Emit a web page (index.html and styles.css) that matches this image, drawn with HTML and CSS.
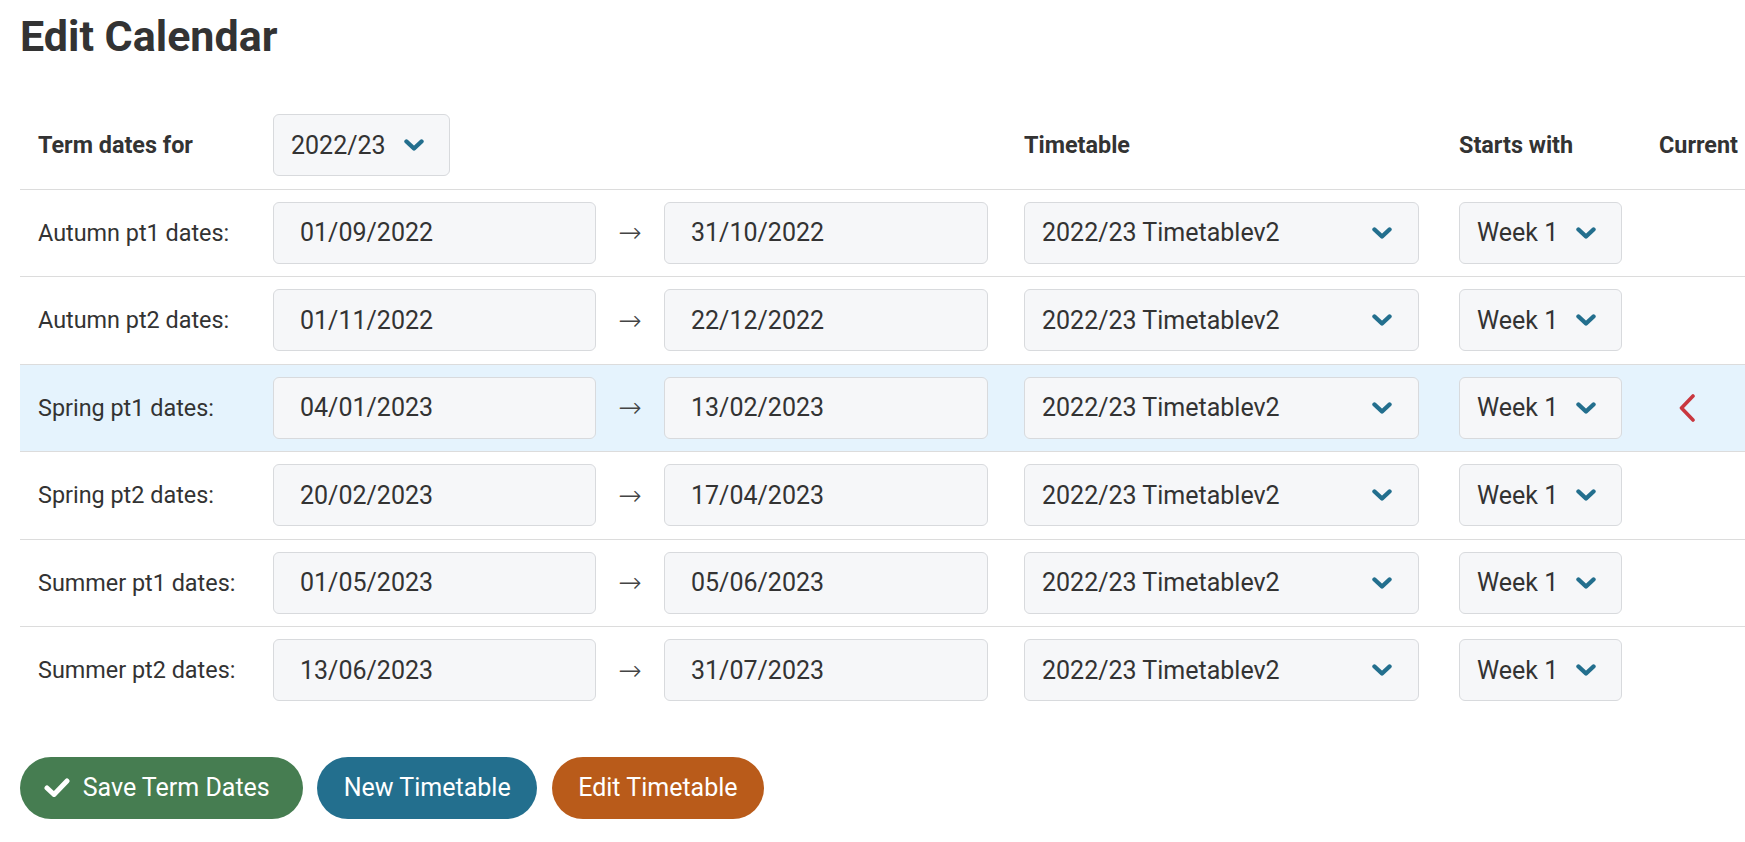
FILE: index.html
```html
<!DOCTYPE html>
<html lang="en">
<head>
<meta charset="utf-8">
<title>Edit Calendar</title>
<link rel="stylesheet" href="styles.css">
</head>
<body>
<div class="page">
  <h1 class="title">Edit Calendar</h1>

  <div class="terms">
    <div class="row head">
      <div class="label">Term dates for</div>
      <div class="field select year"><span>2022/23</span><svg class="chev" viewBox="0 0 20 12" width="20" height="12"><polyline points="2.5,2.5 10,9.5 17.5,2.5"/></svg></div>
      <div class="colhead tt-col">Timetable</div>
      <div class="colhead wk-col">Starts with</div>
      <div class="colhead cur-col">Current</div>
    </div>

    <div class="row">
      <div class="label">Autumn pt1 dates:</div>
      <div class="field date">01/09/2022</div>
      <div class="arrow">→</div>
      <div class="field date">31/10/2022</div>
      <div class="field select tt"><span>2022/23 Timetablev2</span><svg class="chev" viewBox="0 0 20 12" width="20" height="12"><polyline points="2.5,2.5 10,9.5 17.5,2.5"/></svg></div>
      <div class="field select week"><span>Week 1</span><svg class="chev" viewBox="0 0 20 12" width="20" height="12"><polyline points="2.5,2.5 10,9.5 17.5,2.5"/></svg></div>
    </div>

    <div class="row">
      <div class="label">Autumn pt2 dates:</div>
      <div class="field date">01/11/2022</div>
      <div class="arrow">→</div>
      <div class="field date">22/12/2022</div>
      <div class="field select tt"><span>2022/23 Timetablev2</span><svg class="chev" viewBox="0 0 20 12" width="20" height="12"><polyline points="2.5,2.5 10,9.5 17.5,2.5"/></svg></div>
      <div class="field select week"><span>Week 1</span><svg class="chev" viewBox="0 0 20 12" width="20" height="12"><polyline points="2.5,2.5 10,9.5 17.5,2.5"/></svg></div>
    </div>

    <div class="row current">
      <div class="label">Spring pt1 dates:</div>
      <div class="field date">04/01/2023</div>
      <div class="arrow">→</div>
      <div class="field date">13/02/2023</div>
      <div class="field select tt"><span>2022/23 Timetablev2</span><svg class="chev" viewBox="0 0 20 12" width="20" height="12"><polyline points="2.5,2.5 10,9.5 17.5,2.5"/></svg></div>
      <div class="field select week"><span>Week 1</span><svg class="chev" viewBox="0 0 20 12" width="20" height="12"><polyline points="2.5,2.5 10,9.5 17.5,2.5"/></svg></div>
      <div class="marker"><svg viewBox="0 0 17 28" width="17" height="28"><polyline points="15,2 3.5,14 15,26"/></svg></div>
    </div>

    <div class="row">
      <div class="label">Spring pt2 dates:</div>
      <div class="field date">20/02/2023</div>
      <div class="arrow">→</div>
      <div class="field date">17/04/2023</div>
      <div class="field select tt"><span>2022/23 Timetablev2</span><svg class="chev" viewBox="0 0 20 12" width="20" height="12"><polyline points="2.5,2.5 10,9.5 17.5,2.5"/></svg></div>
      <div class="field select week"><span>Week 1</span><svg class="chev" viewBox="0 0 20 12" width="20" height="12"><polyline points="2.5,2.5 10,9.5 17.5,2.5"/></svg></div>
    </div>

    <div class="row">
      <div class="label">Summer pt1 dates:</div>
      <div class="field date">01/05/2023</div>
      <div class="arrow">→</div>
      <div class="field date">05/06/2023</div>
      <div class="field select tt"><span>2022/23 Timetablev2</span><svg class="chev" viewBox="0 0 20 12" width="20" height="12"><polyline points="2.5,2.5 10,9.5 17.5,2.5"/></svg></div>
      <div class="field select week"><span>Week 1</span><svg class="chev" viewBox="0 0 20 12" width="20" height="12"><polyline points="2.5,2.5 10,9.5 17.5,2.5"/></svg></div>
    </div>

    <div class="row last">
      <div class="label">Summer pt2 dates:</div>
      <div class="field date">13/06/2023</div>
      <div class="arrow">→</div>
      <div class="field date">31/07/2023</div>
      <div class="field select tt"><span>2022/23 Timetablev2</span><svg class="chev" viewBox="0 0 20 12" width="20" height="12"><polyline points="2.5,2.5 10,9.5 17.5,2.5"/></svg></div>
      <div class="field select week"><span>Week 1</span><svg class="chev" viewBox="0 0 20 12" width="20" height="12"><polyline points="2.5,2.5 10,9.5 17.5,2.5"/></svg></div>
    </div>
  </div>

  <div class="actions">
    <button class="btn btn-save"><svg class="check" viewBox="0 0 26 19" width="26" height="19"><polyline points="3,10 10,16.5 23,3"/></svg>Save Term Dates</button>
    <button class="btn btn-new">New Timetable</button>
    <button class="btn btn-edit">Edit Timetable</button>
  </div>
</div>
</body>
</html>
```

FILE: styles.css
```css
html, body {
  margin: 0;
  padding: 0;
  background: #ffffff;
}

body {
  font-family: Roboto, "Liberation Sans", Arial, sans-serif;
  color: #333333;
}

.page {
  padding: 10px 0 0 20px;
}

.title {
  margin: 0 0 40px;
  font-size: 43px;
  line-height: 52px;
  font-weight: 700;
  color: #333333;
}

.row {
  display: grid;
  grid-template-columns: 253px 323px 68px 324px 36px 395px 40px 163px 37px 1fr;
  align-items: center;
  padding: 12px 0 12.5px;
  border-bottom: 1px solid #dcdcdc;
}

.row.last {
  border-bottom: none;
}

.row.current {
  background: #e5f3fd;
}

.label {
  grid-column: 1;
  padding-left: 18px;
  font-size: 23.4px;
}

.head .label,
.colhead {
  font-weight: 700;
  font-size: 23.4px;
}

.tt-col { grid-column: 6; }
.wk-col { grid-column: 8; white-space: nowrap; }
.cur-col { grid-column: 10; }

.field {
  height: 62px;
  box-sizing: border-box;
  border: 1px solid #d8dadd;
  border-radius: 6px;
  background: #f6f7f9;
  font-size: 25px;
  color: #333333;
  display: flex;
  align-items: center;
  padding-left: 26px;
  white-space: nowrap;
}

.select {
  padding: 0 25.7px 0 17px;
  gap: 18px;
}

.select .chev {
  margin-left: auto;
  flex: none;
}

.chev polyline {
  fill: none;
  stroke: #236f8e;
  stroke-width: 4.4;
  stroke-linecap: round;
  stroke-linejoin: round;
}

.year {
  grid-column: 2;
  justify-self: start;
}

.arrow {
  grid-column: 3;
  text-align: center;
  font-size: 28px;
  color: #444444;
  font-family: "DejaVu Sans", sans-serif;
  font-weight: 200;
}

.tt {
  grid-column: 6;
}

.week {
  grid-column: 8;
}

.marker {
  grid-column: 10;
  padding-left: 19px;
  display: flex;
  align-items: center;
}

.marker polyline {
  fill: none;
  stroke: #c9373f;
  stroke-width: 3.6;
  stroke-linecap: round;
  stroke-linejoin: round;
}

.actions {
  display: flex;
  gap: 14.5px;
  margin-top: 43px;
}

.btn {
  height: 62.7px;
  border: none;
  border-radius: 32px;
  padding: 0 27px;
  font-family: inherit;
  font-size: 25px;
  color: #ffffff;
  display: inline-flex;
  align-items: center;
  cursor: pointer;
}

.btn-save {
  background: #467d51;
  padding: 0 33px 0 24px;
}

.btn-new {
  background: #236f8e;
  padding: 0 26.5px;
}

.btn-edit {
  background: #b95b1a;
  padding: 0 26.5px;
}

.check {
  margin-right: 12.7px;
}

.check polyline {
  fill: none;
  stroke: #ffffff;
  stroke-width: 5;
  stroke-linecap: round;
  stroke-linejoin: round;
}
```
